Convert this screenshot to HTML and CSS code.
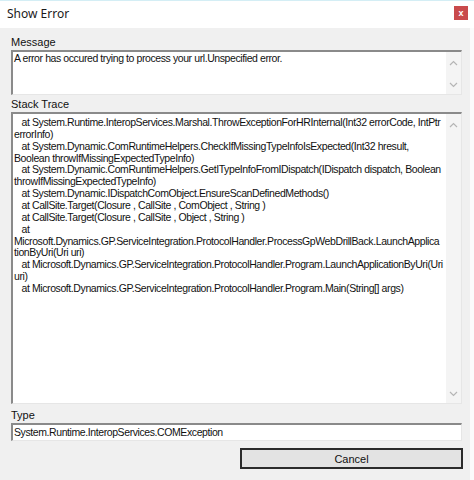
FILE: index.html
```html
<!DOCTYPE html>
<html lang="en">
  <head>
    <meta charset="UTF-8" />
    <title>Show Error</title>
    <link rel="stylesheet" href="styles.css">
  </head>
  <body class="body">
    <div class="dialog">
      <div class="titleBar">
        <span class="title">Show Error</span>
        <span class="close">x</span>
      </div>
      <div class="content">
        <label class="label">Message</label>
        <div class="box msgBox">
          <div class="text">A error has occured trying to process your url.Unspecified error.</div>
          <div class="scroll">
            <svg width="9" height="6" viewBox="0 0 9 6"><path d="M1 5 L4.5 1.5 L8 5" fill="none" stroke="#b5b5b5" stroke-width="1.2"/></svg>
            <svg width="9" height="6" viewBox="0 0 9 6"><path d="M1 1 L4.5 4.5 L8 1" fill="none" stroke="#b5b5b5" stroke-width="1.2"/></svg>
          </div>
        </div>

        <label class="label gapTop">Stack Trace</label>
        <div class="box traceBox">
          <div class="text trace">   at System.Runtime.InteropServices.Marshal.ThrowExceptionForHRInternal(Int32 errorCode, IntPtr
errorInfo)
   at System.Dynamic.ComRuntimeHelpers.CheckIfMissingTypeInfoIsExpected(Int32 hresult,
Boolean throwIfMissingExpectedTypeInfo)
   at System.Dynamic.ComRuntimeHelpers.GetITypeInfoFromIDispatch(IDispatch dispatch, Boolean
throwIfMissingExpectedTypeInfo)
   at System.Dynamic.IDispatchComObject.EnsureScanDefinedMethods()
   at CallSite.Target(Closure , CallSite , ComObject , String )
   at CallSite.Target(Closure , CallSite , Object , String )
   at
Microsoft.Dynamics.GP.ServiceIntegration.ProtocolHandler.ProcessGpWebDrillBack.LaunchApplica
tionByUri(Uri uri)
   at Microsoft.Dynamics.GP.ServiceIntegration.ProtocolHandler.Program.LaunchApplicationByUri(Uri
uri)
   at Microsoft.Dynamics.GP.ServiceIntegration.ProtocolHandler.Program.Main(String[] args)</div>
          <div class="scroll">
            <svg width="9" height="6" viewBox="0 0 9 6"><path d="M1 5 L4.5 1.5 L8 5" fill="none" stroke="#b5b5b5" stroke-width="1.2"/></svg>
            <svg width="9" height="6" viewBox="0 0 9 6"><path d="M1 1 L4.5 4.5 L8 1" fill="none" stroke="#b5b5b5" stroke-width="1.2"/></svg>
          </div>
        </div>

        <label class="label typeLabel">Type</label>
        <div class="box typeBox">
          <div class="text">System.Runtime.InteropServices.COMException</div>
        </div>

        <div class="actions">
          <button class="btn">Cancel</button>
        </div>
      </div>
    </div>
  </body>
</html>
```

FILE: styles.css
```css
.body {
  margin: 0;
  width: 474px;
  height: 480px;
  overflow: hidden;
  background-color: #fbfbfb;
  font-family: "Liberation Sans", Arial, sans-serif;
}
.dialog {
  width: 470px;
  height: 480px;
  display: flex;
  flex-direction: column;
  background-color: #f0f0f0;
}
.titleBar {
  height: 28px;
  background-color: #ffffff;
  border-top: 1px solid #d4eef5;
  display: flex;
  align-items: center;
  justify-content: space-between;
  padding-left: 7px;
  padding-right: 2px;
  width: 474px;
  box-sizing: border-box;
}
.title {
  font-family: "Noto Sans", "Open Sans", sans-serif;
  font-size: 12px;
  color: #1a1a1a;
  margin-top: -2px;
}
.close {
  width: 14px;
  height: 14px;
  margin-right: 4px;
  margin-top: -3px;
  background-color: #c94a4c;
  color: #ffffff;
  font-size: 9px;
  font-weight: bold;
  display: flex;
  align-items: center;
  justify-content: center;
  line-height: 1;
}
.content {
  flex: 1;
  display: flex;
  flex-direction: column;
  padding: 7px 8px 0 11px;
}
.label {
  font-size: 11px;
  line-height: 15px;
  color: #111;
}
.gapTop {
  margin-top: 2px;
}
.typeLabel {
  margin-top: 4px;
}
.box {
  box-sizing: border-box;
  background-color: #ffffff;
  border-style: solid;
  border-width: 2px 1px 1px 2px;
  border-color: #8a8a8a #e6e6e6 #e6e6e6 #8a8a8a;
  display: flex;
  justify-content: space-between;
}
.text {
  font-size: 10.5px;
  line-height: 11.86px;
  color: #111;
  padding: 1px 0 0 1px;
  letter-spacing: -0.41px;
}
.trace {
  white-space: pre;
  padding-top: 3px;
}
.msgBox {
  height: 45px;
}
.traceBox {
  height: 292px;
}
.typeBox {
  height: 18px;
}
.typeBox .text {
  padding-top: 2px;
}
.scroll {
  width: 15px;
  background-color: #f4f4f4;
  display: flex;
  flex-direction: column;
  justify-content: space-between;
  align-items: center;
  padding: 8px 0 6px;
}
.actions {
  display: flex;
  justify-content: flex-end;
  margin-top: 7px;
}
.btn {
  width: 223px;
  height: 21px;
  box-sizing: border-box;
  border: 2px solid #2b2b2b;
  background-color: #e3e3e3;
  font-family: "Liberation Sans", Arial, sans-serif;
  font-size: 11px;
  color: #111;
  padding: 0;
  margin-right: -1px;
}
```
